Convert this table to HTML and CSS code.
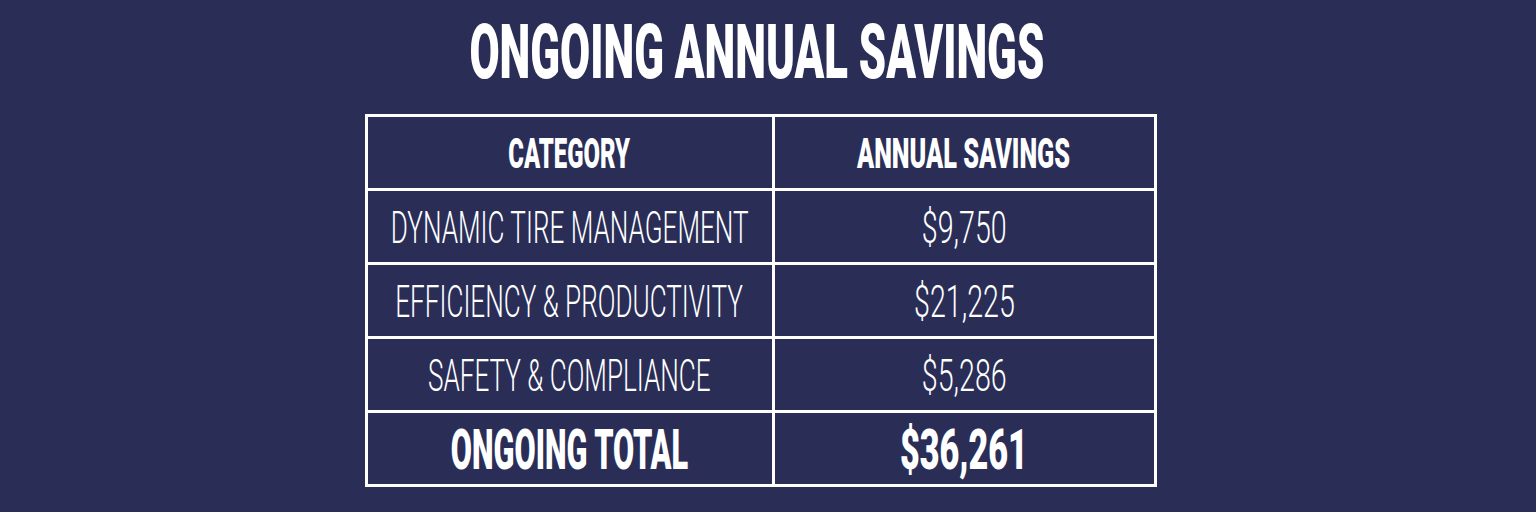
FILE: index.html
```html
<!DOCTYPE html>
<html lang="en">
<head>
<meta charset="utf-8">
<title>Ongoing Annual Savings</title>
<link rel="stylesheet" href="styles.css">
</head>
<body>
<main class="page">
  <h1 class="title"><span class="squeeze sq-title">ONGOING ANNUAL SAVINGS</span></h1>
  <div class="savings" role="table">
    <div class="cell head" role="columnheader"><span class="squeeze sq-head">CATEGORY</span></div>
    <div class="cell head" role="columnheader"><span class="squeeze sq-head2">ANNUAL SAVINGS</span></div>

    <div class="cell" role="cell"><span class="squeeze sq-row">DYNAMIC TIRE MANAGEMENT</span></div>
    <div class="cell" role="cell"><span class="squeeze sq-num">$9,750</span></div>

    <div class="cell" role="cell"><span class="squeeze sq-row">EFFICIENCY &amp; PRODUCTIVITY</span></div>
    <div class="cell" role="cell"><span class="squeeze sq-num">$21,225</span></div>

    <div class="cell" role="cell"><span class="squeeze sq-row">SAFETY &amp; COMPLIANCE</span></div>
    <div class="cell" role="cell"><span class="squeeze sq-num">$5,286</span></div>

    <div class="cell total" role="cell"><span class="squeeze sq-total">ONGOING TOTAL</span></div>
    <div class="cell total" role="cell"><span class="squeeze sq-totalnum">$36,261</span></div>
  </div>
</main>
</body>
</html>
```
FILE: styles.css
```css
html, body {
  margin: 0;
  padding: 0;
}
body {
  background: #2a2e57;
  color: #ffffff;
  font-family: Roboto, "Liberation Sans", sans-serif;
  width: 1536px;
  height: 512px;
  overflow: hidden;
}
.page {
  display: flex;
  flex-direction: column;
  align-items: center;
}
.title {
  margin: 0;
  height: 114px;
  width: 100%;
  display: flex;
  align-items: center;
  justify-content: center;
  font-size: 76px;
  font-weight: 900;
  line-height: 1;
  padding-right: 22px;
  padding-bottom: 10px;
  box-sizing: border-box;
  overflow: hidden;
}
.squeeze {
  display: inline-block;
  white-space: nowrap;
  flex: none;
  transform-origin: center center;
}
.sq-title { transform: scaleX(0.575); }

.savings {
  display: grid;
  grid-template-columns: 404px 379px;
  grid-auto-rows: 71px;
  gap: 3px;
  padding: 3px;
  background: #ffffff;
  margin-right: 15px;
}
.cell {
  background: #2a2e57;
  display: flex;
  align-items: center;
  justify-content: center;
  overflow: hidden;
  line-height: 1;
  font-size: 44px;
  font-weight: 300;
  padding-top: 3px;
  box-sizing: border-box;
}
.cell.head {
  font-size: 42px;
  font-weight: 900;
}
.sq-head { transform: scaleX(0.568); }
.sq-head2 { transform: scaleX(0.60); }

.sq-row { transform: scaleX(0.593); }
.sq-num { transform: scaleX(0.65); }

.cell.total {
  font-size: 56px;
  font-weight: 900;
}
.sq-total { transform: scaleX(0.548); }
.sq-totalnum { transform: scaleX(0.609); }
```
